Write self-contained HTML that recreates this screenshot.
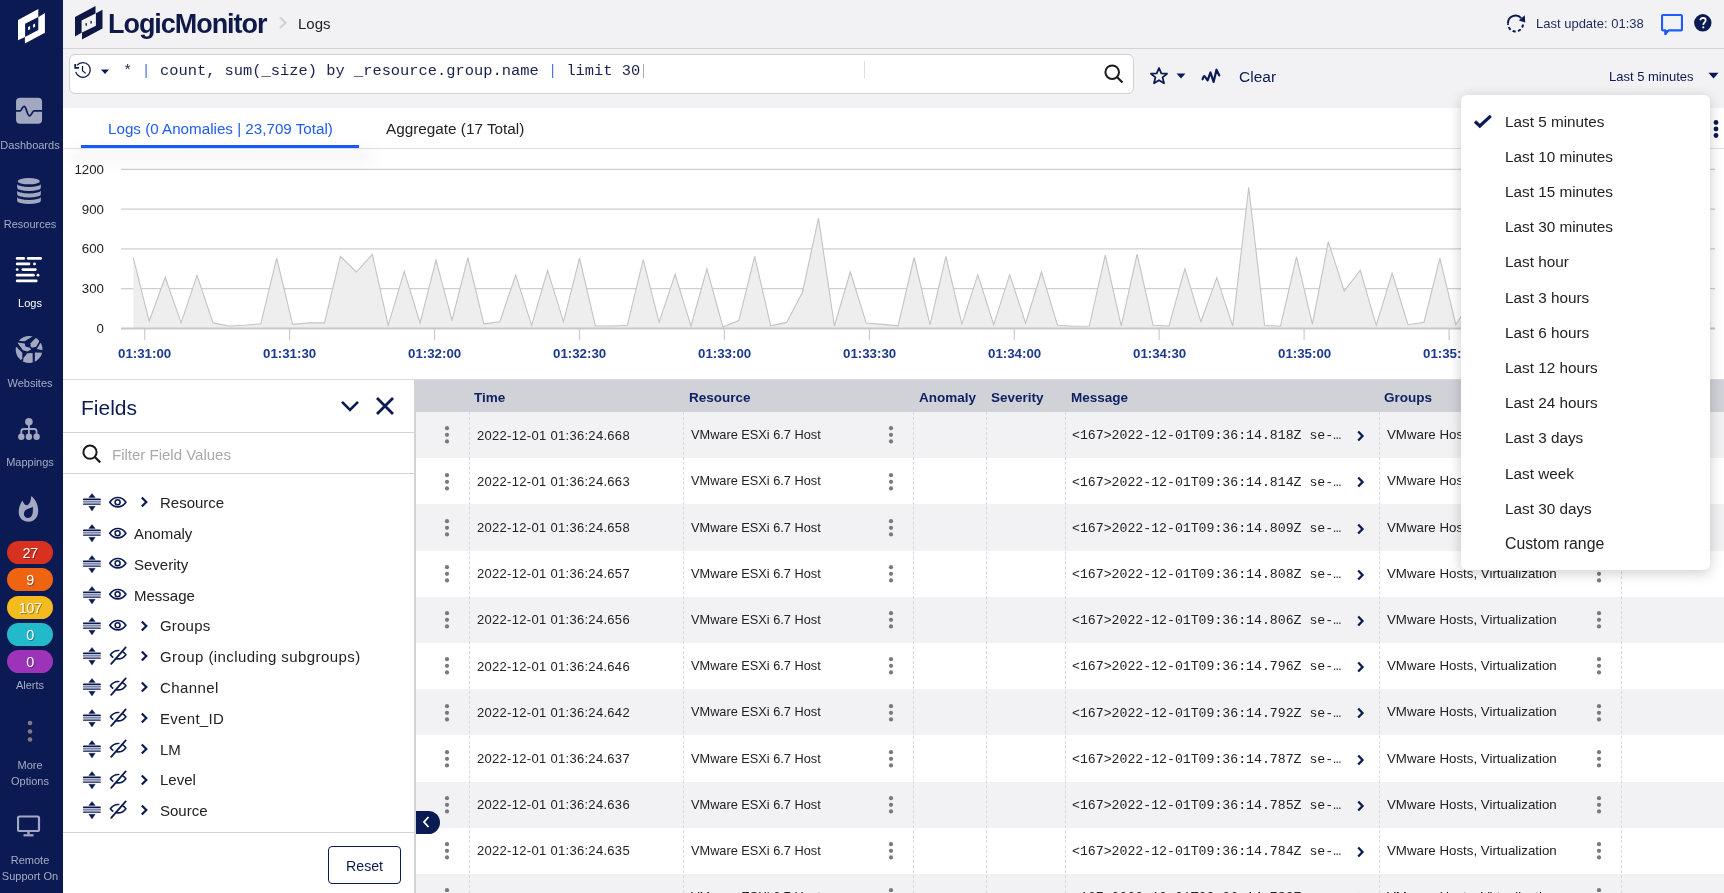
<!DOCTYPE html>
<html><head><meta charset="utf-8"><style>
*{margin:0;padding:0;box-sizing:border-box}
html,body{width:1724px;height:893px;overflow:hidden;background:#fff;font-family:"Liberation Sans",sans-serif;position:relative}
.t,.cell,.fl,.dd,.th,.nl,.yl,.xl,.badge{will-change:transform}
.a{position:absolute}
.nav{left:0;top:0;width:63px;height:893px;background:#0b1a52}
.nl{position:absolute;left:0;width:60px;text-align:center;font-size:11px;line-height:14px;color:#a7acc4;white-space:nowrap}
.hdr{left:63px;top:0;width:1661px;height:49px;background:#f2f2f5;border-bottom:1px solid #d3d3d8}
.bar{left:63px;top:49px;width:1661px;height:59px;background:#f2f2f5}
.sbox{left:69px;top:55px;width:1065px;height:39px;background:#fff;border:1px solid #cfd0d5;border-radius:6px}
.mono{font-family:"Liberation Mono",monospace}
.t{position:absolute;white-space:nowrap;line-height:1}
.badge{position:absolute;left:7px;width:46px;height:23px;border-radius:11.5px;color:#fff;font-size:14.5px;text-align:center;line-height:24px;letter-spacing:-0.6px;text-shadow:1px 1px 0 rgba(0,0,40,.35)}
.th{position:absolute;top:391px;font-size:13.5px;line-height:1;font-weight:bold;color:#0f2263;white-space:nowrap}
.row{position:absolute;left:416px;width:1308px;height:47px}
.row.g{background:#f2f2f5}
.cell{position:absolute;font-size:13px;line-height:1;color:#222;white-space:nowrap}
.vd{position:absolute;top:412px;height:481px;width:0;border-left:1px dashed #d6d8e2}
.fl{position:absolute;font-size:15px;line-height:1;color:#222;white-space:nowrap}
.dd{position:absolute;font-size:15.3px;line-height:1;color:#222;white-space:nowrap;left:1505px}
.yl{position:absolute;font-size:13.3px;line-height:1;color:#222;text-align:right;width:40px;left:64px}
.xl{position:absolute;font-size:13.3px;line-height:1;color:#1b3a8c;font-weight:bold;white-space:nowrap}
</style></head><body>
<div class="a nav"></div>
<svg class="a" style="left:17.9px;top:8.9px" width="28" height="35" viewBox="0 0 28 35" fill="#fff">
<path d="M20.3,0 L20.3,8 L7.1,14.7 L7.1,28 L0,31.2 L0,10.9 Z"/>
<path d="M26.9,4 L26.9,23.7 L6.9,34.5 L6.9,27.9 L20.3,21 L20.3,8.3 Z"/>
<path d="M10.1,18 L12.1,17 L12.1,20.2 L10.1,21.2 Z"/><path d="M15.1,15.6 L17.1,14.6 L17.1,17.8 L15.1,18.8 Z"/>
</svg>
<svg class="a" style="left:15px;top:97px" width="28" height="28" viewBox="0 0 28 28">
<rect x="1.05" y="0.85" width="26" height="26" rx="4" fill="#a3a8c2"/>
<path d="M1,13.85 L5.3,13.85 C6.5,13.85 7.3,9.4 9.1,9.4 C11.5,9.4 12,18.8 14.7,18.8 C16.5,18.8 17.3,13.85 19.2,13.85 L27.1,13.85" stroke="#0b1a52" stroke-width="1.7" fill="none"/>
</svg>
<div class="nl" style="top:138.2px">Dashboards</div>
<svg class="a" style="left:17px;top:177px" width="25" height="28" viewBox="0 0 25 28">
<ellipse cx="11.8" cy="4.2" rx="11.1" ry="3.1" fill="#a3a8c2"/>
<path d="M0.2,7.0 A11.8,3 0 0 0 23.8,7.0 L23.8,11.0 A11.8,3 0 0 1 0.2,11.0 Z" fill="#a3a8c2"/>
<path d="M0.2,13.5 A11.8,3 0 0 0 23.8,13.5 L23.8,17.5 A11.8,3 0 0 1 0.2,17.5 Z" fill="#a3a8c2"/>
<path d="M0.2,20.0 A11.8,3 0 0 0 23.8,20.0 L23.8,24.0 A11.8,3 0 0 1 0.2,24.0 Z" fill="#a3a8c2"/>
</svg>
<div class="nl" style="top:217.2px">Resources</div>
<svg class="a" style="left:15px;top:256px" width="28" height="28" viewBox="0 0 28 28" fill="#fff">
<rect x="0.8" y="1" width="9.3" height="2.8" rx="1.4"/><rect x="11.8" y="1" width="15.2" height="2.8" rx="1.4"/>
<rect x="0.8" y="6.5" width="14.6" height="2.8" rx="1.4"/><circle cx="19.5" cy="7.9" r="1.4"/>
<circle cx="2.2" cy="13.6" r="1.4"/><rect x="6.5" y="12.2" width="15.2" height="2.8" rx="1.4"/>
<rect x="0.8" y="17.8" width="19" height="2.8" rx="1.4"/><circle cx="23" cy="19.2" r="1.4"/>
<rect x="0.8" y="23.5" width="21.8" height="2.8" rx="1.4"/>
</svg>
<div class="nl" style="top:296.2px;color:#fff">Logs</div>
<svg class="a" style="left:12px;top:332px" width="34" height="34" viewBox="0 0 34 34">
<defs><clipPath id="gc"><circle cx="17.1" cy="17.5" r="13.4"/></clipPath></defs>
<g clip-path="url(#gc)" fill="#a3a8c2">
<path d="M3,0 L24,0 L21.3,4.1 L12.6,9.3 L8,8.9 L3,7.4 Z"/>
<path d="M18.6,11.3 L23.4,6.2 Q24.5,5.5 25.5,6.4 L27,8.3 Q27.3,9.3 26.8,10.2 L24.2,14.7 L20.9,15.6 Q19.3,15.6 18.6,14.4 Z"/>
<path d="M24.9,17 L28.3,11 L34,12 L34,18.8 Z"/>
<path d="M5.2,10.6 L12.7,11.5 L13.5,14.6 L17.8,15.7 L19.1,17.4 L15.3,19.5 L11,18.3 Z"/>
<path d="M0,13.5 L3.8,14.3 L10.3,20.7 L10.3,26.8 L8,28.5 L0,34 Z"/>
<path d="M15.3,21.3 L20.6,20.9 L20.8,34 L9,34 L11.1,28.9 L11.5,25.9 Z"/>
<path d="M22.9,20.5 L34,21 L34,34 L22.8,34 Z"/>
</g></svg>
<div class="nl" style="top:376.2px">Websites</div>
<svg class="a" style="left:17px;top:417px" width="24" height="24" viewBox="0 0 24 24" fill="#a3a8c2">
<circle cx="11.9" cy="4.7" r="3.8"/><rect x="11" y="6" width="1.8" height="12"/>
<path d="M4.3,18 L4.3,14.5 Q4.3,12 6.8,12 L17.1,12 Q19.6,12 19.6,14.5 L19.6,18" stroke="#a3a8c2" stroke-width="1.8" fill="none"/>
<circle cx="4.3" cy="19.8" r="3.2"/><circle cx="11.9" cy="19.8" r="3.2"/><circle cx="19.6" cy="19.8" r="3.2"/>
</svg>
<div class="nl" style="top:455.2px">Mappings</div>
<svg class="a" style="left:18px;top:496px" width="22" height="28" viewBox="0 0 22 28">
<path d="M4.5,4.5 C5.5,7.5 7,9.2 8.8,9.2 C11,9.2 12.8,6 13.3,0 C17.5,3.5 20.2,8.5 20.2,15 C20.2,21.5 16,25.8 10.5,25.8 C5,25.8 0.7,22 0.7,16 C0.7,11 2.5,7.5 4.5,4.5 Z M14.8,10.8 C15,14 15,16 14.3,18.5 C13.5,21 11.8,22 10,22 C7.5,22 5.9,20 5.9,18 C5.9,15.5 7.5,13.8 9.5,13 C11.5,12.2 13.5,12 14.8,10.8 Z" fill="#a3a8c2" fill-rule="evenodd"/>
</svg>
<div class="badge" style="top:541px;background:#d9311f">27</div>
<div class="badge" style="top:568px;background:#ee6410">9</div>
<div class="badge" style="top:595.5px;background:#f3bb1d">107</div>
<div class="badge" style="top:622.8px;background:#22b9cb">0</div>
<div class="badge" style="top:650px;background:#9d33b8">0</div>
<div class="nl" style="top:678.2px">Alerts</div>
<svg class="a" style="left:27px;top:720px" width="6" height="24" fill="#7f7c85"><circle cx="3" cy="3" r="2.3"/><circle cx="3" cy="11.5" r="2.3"/><circle cx="3" cy="19.5" r="2.3"/></svg>
<div class="nl" style="top:757.2px;line-height:16px">More<br>Options</div>
<svg class="a" style="left:17px;top:815px" width="24" height="24" viewBox="0 0 24 24">
<rect x="1" y="1.5" width="21" height="14.5" rx="1.5" stroke="#a3a8c2" stroke-width="2.2" fill="none"/>
<rect x="10.3" y="16" width="2.4" height="3.5" fill="#a3a8c2"/><rect x="6.5" y="19.2" width="10" height="2.2" fill="#a3a8c2"/>
</svg>
<div class="nl" style="top:852.2px;line-height:16px">Remote<br>Support On</div>
<div class="a hdr"></div>
<svg class="a" style="left:75.2px;top:6.2px" width="28" height="34" viewBox="0 0 28 34" fill="#0f1845">
<path d="M20.5,0 L20.5,7.5 L6.6,14.4 L6.6,26.8 L0,30.6 L0,11.1 Z"/>
<path d="M27.5,3.8 L27.5,22.6 L7,33.4 L7,26.6 L20.9,19.8 L20.9,7.3 Z"/>
<path d="M10.5,17.2 Q11.3,16.5 11.9,17.6 L11.9,19.3 Q11.2,20.5 10.5,19.6 Z"/><path d="M15.4,14.9 Q16.2,14.2 16.8,15.3 L16.8,17 Q16.1,18.2 15.4,17.3 Z"/>
</svg>
<div class="t" style="left:108px;top:11px;font-size:27px;font-weight:bold;letter-spacing:-1.05px;color:#101a48">LogicMonitor</div>
<svg class="a" style="left:278px;top:16px" width="10" height="14"><path d="M2,1.5 L7.5,6.8 L2,12" stroke="#d2d2d6" stroke-width="2.2" fill="none"/></svg>
<div class="t" style="left:298px;top:16.3px;font-size:15px;color:#222">Logs</div>
<svg class="a" style="left:1505px;top:13px" width="22" height="20" viewBox="0 0 22 20">
<path d="M3,10.5 A7.5,7.5 0 0 1 16.2,5.2" stroke="#0b1a52" stroke-width="2" fill="none"/>
<path d="M13.8,7.6 L20.2,9.6 L19.8,2.2 Z" fill="#0b1a52"/>
<path d="M18,11.5 A7.5,7.5 0 0 1 3,10.5" stroke="#0b1a52" stroke-width="2" fill="none" stroke-dasharray="3.2 2.3"/>
</svg>
<div class="t" style="left:1536px;top:16.8px;font-size:13px;color:#1c2a5c">Last update: 01:38</div>
<svg class="a" style="left:1660px;top:13px" width="25" height="24" viewBox="0 0 25 24">
<path d="M3,2.05 L21,2.05 Q21.95,2.05 21.95,3 L21.95,16.4 Q21.95,17.35 21,17.35 L8.5,17.35 L5.2,21 L5.2,17.35 L3,17.35 Q2.05,17.35 2.05,16.4 L2.05,3 Q2.05,2.05 3,2.05 Z" stroke="#1f5bff" stroke-width="2.1" fill="none" stroke-linejoin="round"/>
<path d="M4.5,17 L10,17 L5.5,22.5 Z" fill="#1f5bff"/>
</svg>
<svg class="a" style="left:1694px;top:14px" width="18" height="18" viewBox="0 0 18 18">
<circle cx="8.8" cy="8.8" r="8.7" fill="#0b1a52"/>
<path d="M6.2,6.2 C6.6,4.6 7.6,3.9 9,3.9 C10.6,3.9 11.7,4.9 11.7,6.3 C11.7,8.3 9.3,8.6 9.3,10.9" stroke="#fff" stroke-width="1.7" fill="none"/>
<rect x="8.4" y="12.4" width="1.8" height="1.9" fill="#fff"/>
</svg>
<div class="a bar"></div>
<div class="a sbox" style="top:54px;height:40px"></div>
<svg class="a" style="left:74px;top:61px" width="18" height="18" viewBox="0 0 18 18">
<path d="M1.7,10.8 A7.4,7.4 0 1 0 3,4.4" stroke="#0b1a52" stroke-width="1.25" fill="none"/>
<path d="M1.2,3 L1.2,6.8 L4.9,6.8" stroke="#0b1a52" stroke-width="1.7" fill="none"/>
<path d="M8.5,5.1 L8.5,9.6 L11.7,12.4" stroke="#0b1a52" stroke-width="1.25" fill="none"/>
</svg>
<svg class="a" style="left:100px;top:69px" width="10" height="6"><path d="M1,0.5 L9,0.5 L5,5 Z" fill="#0b1a52"/></svg>
<div class="t mono" style="left:123px;top:63.6px;font-size:15.4px;color:#1a2250">* <span style="color:#5577d4">|</span> count, sum(_size) by _resource.group.name <span style="color:#5577d4">|</span> limit 30</div>
<div class="a" style="left:643px;top:64px;width:1px;height:14px;background:#aaa"></div>
<div class="a" style="left:864px;top:61px;width:1px;height:17px;background:#ddd"></div>
<svg class="a" style="left:1104px;top:64px" width="20" height="20" viewBox="0 0 20 20">
<circle cx="8.2" cy="8.2" r="6.8" stroke="#1a1a1a" stroke-width="2" fill="none"/>
<path d="M13,13 L18.5,18.5" stroke="#1a1a1a" stroke-width="2.2"/>
</svg>
<svg class="a" style="left:1149px;top:66px" width="20" height="20" viewBox="0 0 20 20">
<path d="M10,2 L12.3,7.3 L18,7.7 L13.6,11.4 L15,17.3 L10,14.2 L5,17.3 L6.4,11.4 L2,7.7 L7.7,7.3 Z" stroke="#0b1a52" stroke-width="1.8" fill="none" stroke-linejoin="round"/>
</svg>
<svg class="a" style="left:1176px;top:73px" width="10" height="6"><path d="M0.5,0.5 L9.5,0.5 L5,5.5 Z" fill="#0b1a52"/></svg>
<svg class="a" style="left:1201px;top:68px" width="21" height="16" viewBox="0 0 21 16">
<path d="M1.6,11.3 Q2.5,8.2 3.5,8.2 L6.6,12.4 L9.5,4.5 L12.6,13.9 L15.5,1.7 L18.3,7.4" stroke="#0b1a52" stroke-width="2.2" fill="none" stroke-linejoin="round" stroke-linecap="round"/>
</svg>
<div class="t" style="left:1239px;top:68.8px;font-size:15.5px;color:#0b1a52">Clear</div>
<div class="t" style="left:1609px;top:70px;font-size:13px;color:#0b1a52">Last 5 minutes</div>
<svg class="a" style="left:1708px;top:72px" width="11" height="7"><path d="M0.5,0.8 L10.5,0.8 L5.5,6.5 Z" fill="#0b1a52"/></svg>
<div class="a" style="left:63px;top:108px;width:1661px;height:272px;background:#fff"></div>
<div class="a" style="left:63px;top:148px;width:1661px;height:1px;background:#dfe0e6"></div>
<div class="a" style="left:63px;top:379px;width:1661px;height:1px;background:#d9d9de"></div>
<div class="t" style="left:107.5px;top:121.3px;font-size:15.2px;color:#1f5bf0">Logs (0 Anomalies | 23,709 Total)</div>
<div class="a" style="left:81px;top:145px;width:278px;height:3px;background:#1a5cff"></div>
<div class="t" style="left:385.5px;top:121.3px;font-size:15.3px;color:#222">Aggregate (17 Total)</div>
<svg class="a" style="left:1711px;top:119px" width="10" height="20" fill="#0b1a52"><circle cx="5" cy="3.5" r="2.4"/><circle cx="5" cy="10" r="2.4"/><circle cx="5" cy="16.5" r="2.4"/></svg>
<svg class="a" style="left:0;top:0" width="1724" height="380">
<line x1="121" y1="169.4" x2="1715" y2="169.4" stroke="#cfcfcf" stroke-width="1.2"/><line x1="121" y1="209.2" x2="1715" y2="209.2" stroke="#cfcfcf" stroke-width="1.2"/><line x1="121" y1="248.9" x2="1715" y2="248.9" stroke="#cfcfcf" stroke-width="1.2"/><line x1="121" y1="288.7" x2="1715" y2="288.7" stroke="#cfcfcf" stroke-width="1.2"/>
<path d="M133.3,328.5 L133.3,257.9 L149.2,321.3 L165.2,277.2 L181.1,322.9 L197.0,275.4 L213.0,322.9 L228.9,326.0 L244.8,325.3 L260.8,323.8 L276.7,258.1 L292.6,324.4 L308.6,322.9 L324.5,322.9 L340.4,256.3 L356.4,272.0 L372.3,254.5 L388.2,325.3 L404.2,271.3 L420.1,322.9 L436.0,260.1 L452.0,320.2 L467.9,257.7 L483.8,323.8 L499.8,321.8 L515.7,274.9 L531.6,325.3 L547.6,270.4 L563.5,321.8 L579.5,258.1 L595.4,326.0 L611.3,326.0 L627.3,325.3 L643.2,259.7 L659.1,322.4 L675.1,274.3 L691.0,326.0 L706.9,268.9 L722.9,326.9 L738.8,320.6 L754.7,256.3 L770.7,325.8 L786.6,322.4 L802.5,292.2 L818.5,218.2 L834.4,326.0 L850.3,272.0 L866.3,323.1 L882.2,324.4 L898.1,325.8 L914.1,257.5 L930.0,324.9 L945.9,256.3 L961.9,324.2 L977.8,274.7 L993.7,324.7 L1009.7,274.7 L1025.6,323.1 L1041.5,272.0 L1057.5,325.3 L1073.4,326.2 L1089.3,326.0 L1105.3,255.2 L1121.2,325.8 L1137.1,254.1 L1153.1,325.3 L1169.0,326.0 L1184.9,268.7 L1200.9,321.8 L1216.8,277.6 L1232.7,325.8 L1248.7,187.3 L1264.6,325.3 L1280.5,326.2 L1296.5,256.8 L1312.4,324.2 L1328.3,241.8 L1344.3,291.1 L1360.2,270.2 L1376.2,325.3 L1392.1,273.1 L1408.0,324.7 L1424.0,322.2 L1439.9,258.1 L1455.8,324.7 L1471.8,300 L1487.7,322 L1503.6,270 L1519.6,324 L1535.5,325 L1551.4,260 L1567.4,323 L1583.3,280 L1599.2,324 L1615.2,322 L1631.1,265 L1647.0,325 L1663.0,324 L1678.9,270 L1694.8,322 L1710.8,323 L1710.8,328.5 Z" fill="#eeeeee"/>
<polyline points="133.3,257.9 149.2,321.3 165.2,277.2 181.1,322.9 197.0,275.4 213.0,322.9 228.9,326.0 244.8,325.3 260.8,323.8 276.7,258.1 292.6,324.4 308.6,322.9 324.5,322.9 340.4,256.3 356.4,272.0 372.3,254.5 388.2,325.3 404.2,271.3 420.1,322.9 436.0,260.1 452.0,320.2 467.9,257.7 483.8,323.8 499.8,321.8 515.7,274.9 531.6,325.3 547.6,270.4 563.5,321.8 579.5,258.1 595.4,326.0 611.3,326.0 627.3,325.3 643.2,259.7 659.1,322.4 675.1,274.3 691.0,326.0 706.9,268.9 722.9,326.9 738.8,320.6 754.7,256.3 770.7,325.8 786.6,322.4 802.5,292.2 818.5,218.2 834.4,326.0 850.3,272.0 866.3,323.1 882.2,324.4 898.1,325.8 914.1,257.5 930.0,324.9 945.9,256.3 961.9,324.2 977.8,274.7 993.7,324.7 1009.7,274.7 1025.6,323.1 1041.5,272.0 1057.5,325.3 1073.4,326.2 1089.3,326.0 1105.3,255.2 1121.2,325.8 1137.1,254.1 1153.1,325.3 1169.0,326.0 1184.9,268.7 1200.9,321.8 1216.8,277.6 1232.7,325.8 1248.7,187.3 1264.6,325.3 1280.5,326.2 1296.5,256.8 1312.4,324.2 1328.3,241.8 1344.3,291.1 1360.2,270.2 1376.2,325.3 1392.1,273.1 1408.0,324.7 1424.0,322.2 1439.9,258.1 1455.8,324.7 1471.8,300 1487.7,322 1503.6,270 1519.6,324 1535.5,325 1551.4,260 1567.4,323 1583.3,280 1599.2,324 1615.2,322 1631.1,265 1647.0,325 1663.0,324 1678.9,270 1694.8,322 1710.8,323" stroke="#c4c4c4" stroke-width="1.1" fill="none" stroke-linejoin="miter"/>
<line x1="121" y1="328.5" x2="1715" y2="328.5" stroke="#c8c8c8" stroke-width="2"/>
<line x1="144.7" y1="329" x2="144.7" y2="340" stroke="#cccccc" stroke-width="1.2"/><line x1="289.6" y1="329" x2="289.6" y2="340" stroke="#cccccc" stroke-width="1.2"/><line x1="434.6" y1="329" x2="434.6" y2="340" stroke="#cccccc" stroke-width="1.2"/><line x1="579.5" y1="329" x2="579.5" y2="340" stroke="#cccccc" stroke-width="1.2"/><line x1="724.4" y1="329" x2="724.4" y2="340" stroke="#cccccc" stroke-width="1.2"/><line x1="869.4" y1="329" x2="869.4" y2="340" stroke="#cccccc" stroke-width="1.2"/><line x1="1014.3" y1="329" x2="1014.3" y2="340" stroke="#cccccc" stroke-width="1.2"/><line x1="1159.2" y1="329" x2="1159.2" y2="340" stroke="#cccccc" stroke-width="1.2"/><line x1="1304.1" y1="329" x2="1304.1" y2="340" stroke="#cccccc" stroke-width="1.2"/><line x1="1449.1" y1="329" x2="1449.1" y2="340" stroke="#cccccc" stroke-width="1.2"/><line x1="1594.0" y1="329" x2="1594.0" y2="340" stroke="#cccccc" stroke-width="1.2"/>
</svg>
<div class="yl" style="top:162.7px">1200</div>
<div class="yl" style="top:202.5px">900</div>
<div class="yl" style="top:242.3px">600</div>
<div class="yl" style="top:282.1px">300</div>
<div class="yl" style="top:321.8px">0</div>
<div class="xl" style="left:118.2px;top:347px">01:31:00</div>
<div class="xl" style="left:263.1px;top:347px">01:31:30</div>
<div class="xl" style="left:408.1px;top:347px">01:32:00</div>
<div class="xl" style="left:553.0px;top:347px">01:32:30</div>
<div class="xl" style="left:697.9px;top:347px">01:33:00</div>
<div class="xl" style="left:842.9px;top:347px">01:33:30</div>
<div class="xl" style="left:987.8px;top:347px">01:34:00</div>
<div class="xl" style="left:1132.7px;top:347px">01:34:30</div>
<div class="xl" style="left:1277.6px;top:347px">01:35:00</div>
<div class="xl" style="left:1422.6px;top:347px">01:35:30</div>
<div class="a" style="left:72px;top:147px;width:300px;height:20px;background:rgba(0,0,0,0.028);filter:blur(6px)"></div>
<div class="a" style="left:63px;top:380px;width:351px;height:513px;background:#fff"></div>
<div class="t" style="left:81px;top:396.6px;font-size:21px;color:#0b1a52">Fields</div>
<svg class="a" style="left:340px;top:400px" width="20" height="12"><path d="M2,1.8 L10,9.8 L18,1.8" stroke="#0b1a52" stroke-width="2.6" fill="none"/></svg>
<svg class="a" style="left:375px;top:396px" width="20" height="20"><path d="M2,2 L18,18 M18,2 L2,18" stroke="#0b1a52" stroke-width="2.8" fill="none"/></svg>
<div class="a" style="left:63px;top:432px;width:351px;height:1px;background:#d3d4d9"></div>
<svg class="a" style="left:82px;top:444px" width="20" height="20" viewBox="0 0 20 20">
<circle cx="8" cy="8.2" r="6.6" stroke="#1a1a1a" stroke-width="2" fill="none"/>
<path d="M12.8,13 L18.2,18.4" stroke="#1a1a1a" stroke-width="2.2"/>
</svg>
<div class="t" style="left:112px;top:447.4px;font-size:15px;color:#a9a9ad">Filter Field Values</div>
<div class="a" style="left:63px;top:473px;width:351px;height:1px;background:#d3d4d9"></div>
<svg class="a" style="left:83px;top:493.3px" width="18" height="18" viewBox="0 0 18 18" fill="#0b1a52">
<path d="M9,0.5 L12.2,4.4 L5.8,4.4 Z" stroke="#0b1a52" stroke-width="0.4" stroke-linejoin="round"/><path d="M9,17.9 L12.2,13.3 L5.8,13.3 Z" stroke="#0b1a52" stroke-width="0.4" stroke-linejoin="round"/>
<rect x="0" y="7" width="17.8" height="2.9" fill="#c5c9dc"/><rect x="0" y="7.9" width="17.8" height="1.5" fill="#7c86aa"/>
<rect x="0" y="5.6" width="17.8" height="1.4" rx="0.6"/><rect x="0" y="10.4" width="17.8" height="1.4" rx="0.6"/>
</svg>
<svg class="a" style="left:108px;top:495.8px" width="20" height="13" viewBox="0 0 20 13">
<path d="M1.8,6.2 C4.5,2.2 7.3,1.5 9.8,1.5 C12.3,1.5 15.1,2.2 17.9,6.2 C15.1,10.2 12.3,10.9 9.8,10.9 C7.3,10.9 4.5,10.2 1.8,6.2 Z" stroke="#0b1a52" stroke-width="1.7" fill="none" stroke-linejoin="round"/>
<circle cx="9.6" cy="6.3" r="2.5" stroke="#0b1a52" stroke-width="1.5" fill="none"/>
</svg>
<svg class="a" style="left:139.5px;top:496.3px" width="9" height="12"><path d="M1.8,1.5 L6.3,6 L1.8,10.5" stroke="#0b1a52" stroke-width="2.2" fill="none"/></svg>
<div class="fl" style="left:160px;top:495.2px;letter-spacing:0px">Resource</div>
<svg class="a" style="left:83px;top:524.1px" width="18" height="18" viewBox="0 0 18 18" fill="#0b1a52">
<path d="M9,0.5 L12.2,4.4 L5.8,4.4 Z" stroke="#0b1a52" stroke-width="0.4" stroke-linejoin="round"/><path d="M9,17.9 L12.2,13.3 L5.8,13.3 Z" stroke="#0b1a52" stroke-width="0.4" stroke-linejoin="round"/>
<rect x="0" y="7" width="17.8" height="2.9" fill="#c5c9dc"/><rect x="0" y="7.9" width="17.8" height="1.5" fill="#7c86aa"/>
<rect x="0" y="5.6" width="17.8" height="1.4" rx="0.6"/><rect x="0" y="10.4" width="17.8" height="1.4" rx="0.6"/>
</svg>
<svg class="a" style="left:108px;top:526.6px" width="20" height="13" viewBox="0 0 20 13">
<path d="M1.8,6.2 C4.5,2.2 7.3,1.5 9.8,1.5 C12.3,1.5 15.1,2.2 17.9,6.2 C15.1,10.2 12.3,10.9 9.8,10.9 C7.3,10.9 4.5,10.2 1.8,6.2 Z" stroke="#0b1a52" stroke-width="1.7" fill="none" stroke-linejoin="round"/>
<circle cx="9.6" cy="6.3" r="2.5" stroke="#0b1a52" stroke-width="1.5" fill="none"/>
</svg>
<div class="fl" style="left:133.5px;top:526.0px">Anomaly</div>
<svg class="a" style="left:83px;top:554.9px" width="18" height="18" viewBox="0 0 18 18" fill="#0b1a52">
<path d="M9,0.5 L12.2,4.4 L5.8,4.4 Z" stroke="#0b1a52" stroke-width="0.4" stroke-linejoin="round"/><path d="M9,17.9 L12.2,13.3 L5.8,13.3 Z" stroke="#0b1a52" stroke-width="0.4" stroke-linejoin="round"/>
<rect x="0" y="7" width="17.8" height="2.9" fill="#c5c9dc"/><rect x="0" y="7.9" width="17.8" height="1.5" fill="#7c86aa"/>
<rect x="0" y="5.6" width="17.8" height="1.4" rx="0.6"/><rect x="0" y="10.4" width="17.8" height="1.4" rx="0.6"/>
</svg>
<svg class="a" style="left:108px;top:557.4px" width="20" height="13" viewBox="0 0 20 13">
<path d="M1.8,6.2 C4.5,2.2 7.3,1.5 9.8,1.5 C12.3,1.5 15.1,2.2 17.9,6.2 C15.1,10.2 12.3,10.9 9.8,10.9 C7.3,10.9 4.5,10.2 1.8,6.2 Z" stroke="#0b1a52" stroke-width="1.7" fill="none" stroke-linejoin="round"/>
<circle cx="9.6" cy="6.3" r="2.5" stroke="#0b1a52" stroke-width="1.5" fill="none"/>
</svg>
<div class="fl" style="left:133.5px;top:556.8px">Severity</div>
<svg class="a" style="left:83px;top:585.7px" width="18" height="18" viewBox="0 0 18 18" fill="#0b1a52">
<path d="M9,0.5 L12.2,4.4 L5.8,4.4 Z" stroke="#0b1a52" stroke-width="0.4" stroke-linejoin="round"/><path d="M9,17.9 L12.2,13.3 L5.8,13.3 Z" stroke="#0b1a52" stroke-width="0.4" stroke-linejoin="round"/>
<rect x="0" y="7" width="17.8" height="2.9" fill="#c5c9dc"/><rect x="0" y="7.9" width="17.8" height="1.5" fill="#7c86aa"/>
<rect x="0" y="5.6" width="17.8" height="1.4" rx="0.6"/><rect x="0" y="10.4" width="17.8" height="1.4" rx="0.6"/>
</svg>
<svg class="a" style="left:108px;top:588.2px" width="20" height="13" viewBox="0 0 20 13">
<path d="M1.8,6.2 C4.5,2.2 7.3,1.5 9.8,1.5 C12.3,1.5 15.1,2.2 17.9,6.2 C15.1,10.2 12.3,10.9 9.8,10.9 C7.3,10.9 4.5,10.2 1.8,6.2 Z" stroke="#0b1a52" stroke-width="1.7" fill="none" stroke-linejoin="round"/>
<circle cx="9.6" cy="6.3" r="2.5" stroke="#0b1a52" stroke-width="1.5" fill="none"/>
</svg>
<div class="fl" style="left:133.5px;top:587.6px">Message</div>
<svg class="a" style="left:83px;top:616.5px" width="18" height="18" viewBox="0 0 18 18" fill="#0b1a52">
<path d="M9,0.5 L12.2,4.4 L5.8,4.4 Z" stroke="#0b1a52" stroke-width="0.4" stroke-linejoin="round"/><path d="M9,17.9 L12.2,13.3 L5.8,13.3 Z" stroke="#0b1a52" stroke-width="0.4" stroke-linejoin="round"/>
<rect x="0" y="7" width="17.8" height="2.9" fill="#c5c9dc"/><rect x="0" y="7.9" width="17.8" height="1.5" fill="#7c86aa"/>
<rect x="0" y="5.6" width="17.8" height="1.4" rx="0.6"/><rect x="0" y="10.4" width="17.8" height="1.4" rx="0.6"/>
</svg>
<svg class="a" style="left:108px;top:619.0px" width="20" height="13" viewBox="0 0 20 13">
<path d="M1.8,6.2 C4.5,2.2 7.3,1.5 9.8,1.5 C12.3,1.5 15.1,2.2 17.9,6.2 C15.1,10.2 12.3,10.9 9.8,10.9 C7.3,10.9 4.5,10.2 1.8,6.2 Z" stroke="#0b1a52" stroke-width="1.7" fill="none" stroke-linejoin="round"/>
<circle cx="9.6" cy="6.3" r="2.5" stroke="#0b1a52" stroke-width="1.5" fill="none"/>
</svg>
<svg class="a" style="left:139.5px;top:619.5px" width="9" height="12"><path d="M1.8,1.5 L6.3,6 L1.8,10.5" stroke="#0b1a52" stroke-width="2.2" fill="none"/></svg>
<div class="fl" style="left:160px;top:618.4px;letter-spacing:0.2px">Groups</div>
<svg class="a" style="left:83px;top:647.3px" width="18" height="18" viewBox="0 0 18 18" fill="#0b1a52">
<path d="M9,0.5 L12.2,4.4 L5.8,4.4 Z" stroke="#0b1a52" stroke-width="0.4" stroke-linejoin="round"/><path d="M9,17.9 L12.2,13.3 L5.8,13.3 Z" stroke="#0b1a52" stroke-width="0.4" stroke-linejoin="round"/>
<rect x="0" y="7" width="17.8" height="2.9" fill="#c5c9dc"/><rect x="0" y="7.9" width="17.8" height="1.5" fill="#7c86aa"/>
<rect x="0" y="5.6" width="17.8" height="1.4" rx="0.6"/><rect x="0" y="10.4" width="17.8" height="1.4" rx="0.6"/>
</svg>
<svg class="a" style="left:108px;top:646.3px" width="20" height="20" viewBox="0 0 20 20">
<path d="M2.4,8.7 C5,5.2 7.5,4.5 10.1,4.5 C12.7,4.5 15.3,5.2 17.9,8.7 C15.3,12.2 12.7,12.9 10.1,12.9 C7.5,12.9 5,12.2 2.4,8.7 Z" stroke="#0b1a52" stroke-width="1.6" fill="none" stroke-linejoin="round"/>
<path d="M2.1,16.6 L16.6,0.1" stroke="#fff" stroke-width="2"/>
<path d="M3.2,17.9 L17.7,1.4" stroke="#0b1a52" stroke-width="1.8" stroke-linecap="round"/>
</svg>
<svg class="a" style="left:139.5px;top:650.3px" width="9" height="12"><path d="M1.8,1.5 L6.3,6 L1.8,10.5" stroke="#0b1a52" stroke-width="2.2" fill="none"/></svg>
<div class="fl" style="left:160px;top:649.2px;letter-spacing:0.42px">Group (including subgroups)</div>
<svg class="a" style="left:83px;top:678.1px" width="18" height="18" viewBox="0 0 18 18" fill="#0b1a52">
<path d="M9,0.5 L12.2,4.4 L5.8,4.4 Z" stroke="#0b1a52" stroke-width="0.4" stroke-linejoin="round"/><path d="M9,17.9 L12.2,13.3 L5.8,13.3 Z" stroke="#0b1a52" stroke-width="0.4" stroke-linejoin="round"/>
<rect x="0" y="7" width="17.8" height="2.9" fill="#c5c9dc"/><rect x="0" y="7.9" width="17.8" height="1.5" fill="#7c86aa"/>
<rect x="0" y="5.6" width="17.8" height="1.4" rx="0.6"/><rect x="0" y="10.4" width="17.8" height="1.4" rx="0.6"/>
</svg>
<svg class="a" style="left:108px;top:677.1px" width="20" height="20" viewBox="0 0 20 20">
<path d="M2.4,8.7 C5,5.2 7.5,4.5 10.1,4.5 C12.7,4.5 15.3,5.2 17.9,8.7 C15.3,12.2 12.7,12.9 10.1,12.9 C7.5,12.9 5,12.2 2.4,8.7 Z" stroke="#0b1a52" stroke-width="1.6" fill="none" stroke-linejoin="round"/>
<path d="M2.1,16.6 L16.6,0.1" stroke="#fff" stroke-width="2"/>
<path d="M3.2,17.9 L17.7,1.4" stroke="#0b1a52" stroke-width="1.8" stroke-linecap="round"/>
</svg>
<svg class="a" style="left:139.5px;top:681.1px" width="9" height="12"><path d="M1.8,1.5 L6.3,6 L1.8,10.5" stroke="#0b1a52" stroke-width="2.2" fill="none"/></svg>
<div class="fl" style="left:160px;top:680.0px;letter-spacing:0.4px">Channel</div>
<svg class="a" style="left:83px;top:708.9px" width="18" height="18" viewBox="0 0 18 18" fill="#0b1a52">
<path d="M9,0.5 L12.2,4.4 L5.8,4.4 Z" stroke="#0b1a52" stroke-width="0.4" stroke-linejoin="round"/><path d="M9,17.9 L12.2,13.3 L5.8,13.3 Z" stroke="#0b1a52" stroke-width="0.4" stroke-linejoin="round"/>
<rect x="0" y="7" width="17.8" height="2.9" fill="#c5c9dc"/><rect x="0" y="7.9" width="17.8" height="1.5" fill="#7c86aa"/>
<rect x="0" y="5.6" width="17.8" height="1.4" rx="0.6"/><rect x="0" y="10.4" width="17.8" height="1.4" rx="0.6"/>
</svg>
<svg class="a" style="left:108px;top:707.9px" width="20" height="20" viewBox="0 0 20 20">
<path d="M2.4,8.7 C5,5.2 7.5,4.5 10.1,4.5 C12.7,4.5 15.3,5.2 17.9,8.7 C15.3,12.2 12.7,12.9 10.1,12.9 C7.5,12.9 5,12.2 2.4,8.7 Z" stroke="#0b1a52" stroke-width="1.6" fill="none" stroke-linejoin="round"/>
<path d="M2.1,16.6 L16.6,0.1" stroke="#fff" stroke-width="2"/>
<path d="M3.2,17.9 L17.7,1.4" stroke="#0b1a52" stroke-width="1.8" stroke-linecap="round"/>
</svg>
<svg class="a" style="left:139.5px;top:711.9px" width="9" height="12"><path d="M1.8,1.5 L6.3,6 L1.8,10.5" stroke="#0b1a52" stroke-width="2.2" fill="none"/></svg>
<div class="fl" style="left:160px;top:710.8px;letter-spacing:0.3px">Event_ID</div>
<svg class="a" style="left:83px;top:739.7px" width="18" height="18" viewBox="0 0 18 18" fill="#0b1a52">
<path d="M9,0.5 L12.2,4.4 L5.8,4.4 Z" stroke="#0b1a52" stroke-width="0.4" stroke-linejoin="round"/><path d="M9,17.9 L12.2,13.3 L5.8,13.3 Z" stroke="#0b1a52" stroke-width="0.4" stroke-linejoin="round"/>
<rect x="0" y="7" width="17.8" height="2.9" fill="#c5c9dc"/><rect x="0" y="7.9" width="17.8" height="1.5" fill="#7c86aa"/>
<rect x="0" y="5.6" width="17.8" height="1.4" rx="0.6"/><rect x="0" y="10.4" width="17.8" height="1.4" rx="0.6"/>
</svg>
<svg class="a" style="left:108px;top:738.7px" width="20" height="20" viewBox="0 0 20 20">
<path d="M2.4,8.7 C5,5.2 7.5,4.5 10.1,4.5 C12.7,4.5 15.3,5.2 17.9,8.7 C15.3,12.2 12.7,12.9 10.1,12.9 C7.5,12.9 5,12.2 2.4,8.7 Z" stroke="#0b1a52" stroke-width="1.6" fill="none" stroke-linejoin="round"/>
<path d="M2.1,16.6 L16.6,0.1" stroke="#fff" stroke-width="2"/>
<path d="M3.2,17.9 L17.7,1.4" stroke="#0b1a52" stroke-width="1.8" stroke-linecap="round"/>
</svg>
<svg class="a" style="left:139.5px;top:742.7px" width="9" height="12"><path d="M1.8,1.5 L6.3,6 L1.8,10.5" stroke="#0b1a52" stroke-width="2.2" fill="none"/></svg>
<div class="fl" style="left:160px;top:741.6px;letter-spacing:0px">LM</div>
<svg class="a" style="left:83px;top:770.5px" width="18" height="18" viewBox="0 0 18 18" fill="#0b1a52">
<path d="M9,0.5 L12.2,4.4 L5.8,4.4 Z" stroke="#0b1a52" stroke-width="0.4" stroke-linejoin="round"/><path d="M9,17.9 L12.2,13.3 L5.8,13.3 Z" stroke="#0b1a52" stroke-width="0.4" stroke-linejoin="round"/>
<rect x="0" y="7" width="17.8" height="2.9" fill="#c5c9dc"/><rect x="0" y="7.9" width="17.8" height="1.5" fill="#7c86aa"/>
<rect x="0" y="5.6" width="17.8" height="1.4" rx="0.6"/><rect x="0" y="10.4" width="17.8" height="1.4" rx="0.6"/>
</svg>
<svg class="a" style="left:108px;top:769.5px" width="20" height="20" viewBox="0 0 20 20">
<path d="M2.4,8.7 C5,5.2 7.5,4.5 10.1,4.5 C12.7,4.5 15.3,5.2 17.9,8.7 C15.3,12.2 12.7,12.9 10.1,12.9 C7.5,12.9 5,12.2 2.4,8.7 Z" stroke="#0b1a52" stroke-width="1.6" fill="none" stroke-linejoin="round"/>
<path d="M2.1,16.6 L16.6,0.1" stroke="#fff" stroke-width="2"/>
<path d="M3.2,17.9 L17.7,1.4" stroke="#0b1a52" stroke-width="1.8" stroke-linecap="round"/>
</svg>
<svg class="a" style="left:139.5px;top:773.5px" width="9" height="12"><path d="M1.8,1.5 L6.3,6 L1.8,10.5" stroke="#0b1a52" stroke-width="2.2" fill="none"/></svg>
<div class="fl" style="left:160px;top:772.4px;letter-spacing:0px">Level</div>
<svg class="a" style="left:83px;top:801.3px" width="18" height="18" viewBox="0 0 18 18" fill="#0b1a52">
<path d="M9,0.5 L12.2,4.4 L5.8,4.4 Z" stroke="#0b1a52" stroke-width="0.4" stroke-linejoin="round"/><path d="M9,17.9 L12.2,13.3 L5.8,13.3 Z" stroke="#0b1a52" stroke-width="0.4" stroke-linejoin="round"/>
<rect x="0" y="7" width="17.8" height="2.9" fill="#c5c9dc"/><rect x="0" y="7.9" width="17.8" height="1.5" fill="#7c86aa"/>
<rect x="0" y="5.6" width="17.8" height="1.4" rx="0.6"/><rect x="0" y="10.4" width="17.8" height="1.4" rx="0.6"/>
</svg>
<svg class="a" style="left:108px;top:800.3px" width="20" height="20" viewBox="0 0 20 20">
<path d="M2.4,8.7 C5,5.2 7.5,4.5 10.1,4.5 C12.7,4.5 15.3,5.2 17.9,8.7 C15.3,12.2 12.7,12.9 10.1,12.9 C7.5,12.9 5,12.2 2.4,8.7 Z" stroke="#0b1a52" stroke-width="1.6" fill="none" stroke-linejoin="round"/>
<path d="M2.1,16.6 L16.6,0.1" stroke="#fff" stroke-width="2"/>
<path d="M3.2,17.9 L17.7,1.4" stroke="#0b1a52" stroke-width="1.8" stroke-linecap="round"/>
</svg>
<svg class="a" style="left:139.5px;top:804.3px" width="9" height="12"><path d="M1.8,1.5 L6.3,6 L1.8,10.5" stroke="#0b1a52" stroke-width="2.2" fill="none"/></svg>
<div class="fl" style="left:160px;top:803.2px;letter-spacing:0px">Source</div>
<div class="a" style="left:63px;top:832px;width:351px;height:1px;background:#d3d4d9"></div>
<div class="a" style="left:328px;top:846px;width:73px;height:38px;border:1.3px solid #0b1a52;border-radius:4px"></div>
<div class="t" style="left:346px;top:859.2px;font-size:14.2px;color:#0b1a52">Reset</div>
<div class="a" style="left:414px;top:380px;width:2px;height:513px;background:#d2d3d8"></div>
<div class="a" style="left:416px;top:380px;width:1308px;height:32px;background:#d1d2d7"></div>
<div class="th" style="left:474.4px">Time</div>
<div class="th" style="left:689.4px">Resource</div>
<div class="th" style="left:919.2px">Anomaly</div>
<div class="th" style="left:990.9px">Severity</div>
<div class="th" style="left:1070.9px">Message</div>
<div class="th" style="left:1384px">Groups</div>
<div class="a" style="left:416px;top:412.0px;width:1308px;height:46.2px;background:#f2f2f5"></div>
<svg class="a" style="left:444px;top:426.3px" width="6" height="18" fill="#7a7a7a"><circle cx="3" cy="2.2" r="2.1"/><circle cx="3" cy="8.8" r="2.1"/><circle cx="3" cy="15.4" r="2.1"/></svg>
<div class="cell" style="left:477px;top:428.5px;letter-spacing:0.3px">2022-12-01 01:36:24.668</div>
<div class="cell" style="left:691px;top:429.2px;font-size:12.75px">VMware ESXi 6.7 Host</div>
<svg class="a" style="left:888px;top:426.3px" width="6" height="18" fill="#7a7a7a"><circle cx="3" cy="2.2" r="2.1"/><circle cx="3" cy="8.8" r="2.1"/><circle cx="3" cy="15.4" r="2.1"/></svg>
<div class="cell mono" style="left:1072px;top:429.3px;font-size:13.2px">&lt;167&gt;2022-12-01T09:36:14.818Z se-…</div>
<svg class="a" style="left:1356px;top:430.1px" width="10" height="12"><path d="M2.2,1.5 L6.5,6 L2.2,10.5" stroke="#0b1a52" stroke-width="2.3" fill="none"/></svg>
<div class="cell" style="left:1386.5px;top:428.1px;font-size:13.3px">VMware Hosts, Virtualization</div>
<svg class="a" style="left:1596px;top:426.3px" width="6" height="18" fill="#7a7a7a"><circle cx="3" cy="2.2" r="2.1"/><circle cx="3" cy="8.8" r="2.1"/><circle cx="3" cy="15.4" r="2.1"/></svg>
<svg class="a" style="left:444px;top:472.5px" width="6" height="18" fill="#7a7a7a"><circle cx="3" cy="2.2" r="2.1"/><circle cx="3" cy="8.8" r="2.1"/><circle cx="3" cy="15.4" r="2.1"/></svg>
<div class="cell" style="left:477px;top:474.7px;letter-spacing:0.3px">2022-12-01 01:36:24.663</div>
<div class="cell" style="left:691px;top:475.4px;font-size:12.75px">VMware ESXi 6.7 Host</div>
<svg class="a" style="left:888px;top:472.5px" width="6" height="18" fill="#7a7a7a"><circle cx="3" cy="2.2" r="2.1"/><circle cx="3" cy="8.8" r="2.1"/><circle cx="3" cy="15.4" r="2.1"/></svg>
<div class="cell mono" style="left:1072px;top:475.5px;font-size:13.2px">&lt;167&gt;2022-12-01T09:36:14.814Z se-…</div>
<svg class="a" style="left:1356px;top:476.3px" width="10" height="12"><path d="M2.2,1.5 L6.5,6 L2.2,10.5" stroke="#0b1a52" stroke-width="2.3" fill="none"/></svg>
<div class="cell" style="left:1386.5px;top:474.3px;font-size:13.3px">VMware Hosts, Virtualization</div>
<svg class="a" style="left:1596px;top:472.5px" width="6" height="18" fill="#7a7a7a"><circle cx="3" cy="2.2" r="2.1"/><circle cx="3" cy="8.8" r="2.1"/><circle cx="3" cy="15.4" r="2.1"/></svg>
<div class="a" style="left:416px;top:504.4px;width:1308px;height:46.2px;background:#f2f2f5"></div>
<svg class="a" style="left:444px;top:518.7px" width="6" height="18" fill="#7a7a7a"><circle cx="3" cy="2.2" r="2.1"/><circle cx="3" cy="8.8" r="2.1"/><circle cx="3" cy="15.4" r="2.1"/></svg>
<div class="cell" style="left:477px;top:520.9px;letter-spacing:0.3px">2022-12-01 01:36:24.658</div>
<div class="cell" style="left:691px;top:521.6px;font-size:12.75px">VMware ESXi 6.7 Host</div>
<svg class="a" style="left:888px;top:518.7px" width="6" height="18" fill="#7a7a7a"><circle cx="3" cy="2.2" r="2.1"/><circle cx="3" cy="8.8" r="2.1"/><circle cx="3" cy="15.4" r="2.1"/></svg>
<div class="cell mono" style="left:1072px;top:521.7px;font-size:13.2px">&lt;167&gt;2022-12-01T09:36:14.809Z se-…</div>
<svg class="a" style="left:1356px;top:522.5px" width="10" height="12"><path d="M2.2,1.5 L6.5,6 L2.2,10.5" stroke="#0b1a52" stroke-width="2.3" fill="none"/></svg>
<div class="cell" style="left:1386.5px;top:520.5px;font-size:13.3px">VMware Hosts, Virtualization</div>
<svg class="a" style="left:1596px;top:518.7px" width="6" height="18" fill="#7a7a7a"><circle cx="3" cy="2.2" r="2.1"/><circle cx="3" cy="8.8" r="2.1"/><circle cx="3" cy="15.4" r="2.1"/></svg>
<svg class="a" style="left:444px;top:564.9px" width="6" height="18" fill="#7a7a7a"><circle cx="3" cy="2.2" r="2.1"/><circle cx="3" cy="8.8" r="2.1"/><circle cx="3" cy="15.4" r="2.1"/></svg>
<div class="cell" style="left:477px;top:567.1px;letter-spacing:0.3px">2022-12-01 01:36:24.657</div>
<div class="cell" style="left:691px;top:567.8px;font-size:12.75px">VMware ESXi 6.7 Host</div>
<svg class="a" style="left:888px;top:564.9px" width="6" height="18" fill="#7a7a7a"><circle cx="3" cy="2.2" r="2.1"/><circle cx="3" cy="8.8" r="2.1"/><circle cx="3" cy="15.4" r="2.1"/></svg>
<div class="cell mono" style="left:1072px;top:567.9px;font-size:13.2px">&lt;167&gt;2022-12-01T09:36:14.808Z se-…</div>
<svg class="a" style="left:1356px;top:568.7px" width="10" height="12"><path d="M2.2,1.5 L6.5,6 L2.2,10.5" stroke="#0b1a52" stroke-width="2.3" fill="none"/></svg>
<div class="cell" style="left:1386.5px;top:566.7px;font-size:13.3px">VMware Hosts, Virtualization</div>
<svg class="a" style="left:1596px;top:564.9px" width="6" height="18" fill="#7a7a7a"><circle cx="3" cy="2.2" r="2.1"/><circle cx="3" cy="8.8" r="2.1"/><circle cx="3" cy="15.4" r="2.1"/></svg>
<div class="a" style="left:416px;top:596.8px;width:1308px;height:46.2px;background:#f2f2f5"></div>
<svg class="a" style="left:444px;top:611.1px" width="6" height="18" fill="#7a7a7a"><circle cx="3" cy="2.2" r="2.1"/><circle cx="3" cy="8.8" r="2.1"/><circle cx="3" cy="15.4" r="2.1"/></svg>
<div class="cell" style="left:477px;top:613.3px;letter-spacing:0.3px">2022-12-01 01:36:24.656</div>
<div class="cell" style="left:691px;top:614.0px;font-size:12.75px">VMware ESXi 6.7 Host</div>
<svg class="a" style="left:888px;top:611.1px" width="6" height="18" fill="#7a7a7a"><circle cx="3" cy="2.2" r="2.1"/><circle cx="3" cy="8.8" r="2.1"/><circle cx="3" cy="15.4" r="2.1"/></svg>
<div class="cell mono" style="left:1072px;top:614.1px;font-size:13.2px">&lt;167&gt;2022-12-01T09:36:14.806Z se-…</div>
<svg class="a" style="left:1356px;top:614.9px" width="10" height="12"><path d="M2.2,1.5 L6.5,6 L2.2,10.5" stroke="#0b1a52" stroke-width="2.3" fill="none"/></svg>
<div class="cell" style="left:1386.5px;top:612.9px;font-size:13.3px">VMware Hosts, Virtualization</div>
<svg class="a" style="left:1596px;top:611.1px" width="6" height="18" fill="#7a7a7a"><circle cx="3" cy="2.2" r="2.1"/><circle cx="3" cy="8.8" r="2.1"/><circle cx="3" cy="15.4" r="2.1"/></svg>
<svg class="a" style="left:444px;top:657.3px" width="6" height="18" fill="#7a7a7a"><circle cx="3" cy="2.2" r="2.1"/><circle cx="3" cy="8.8" r="2.1"/><circle cx="3" cy="15.4" r="2.1"/></svg>
<div class="cell" style="left:477px;top:659.5px;letter-spacing:0.3px">2022-12-01 01:36:24.646</div>
<div class="cell" style="left:691px;top:660.2px;font-size:12.75px">VMware ESXi 6.7 Host</div>
<svg class="a" style="left:888px;top:657.3px" width="6" height="18" fill="#7a7a7a"><circle cx="3" cy="2.2" r="2.1"/><circle cx="3" cy="8.8" r="2.1"/><circle cx="3" cy="15.4" r="2.1"/></svg>
<div class="cell mono" style="left:1072px;top:660.3px;font-size:13.2px">&lt;167&gt;2022-12-01T09:36:14.796Z se-…</div>
<svg class="a" style="left:1356px;top:661.1px" width="10" height="12"><path d="M2.2,1.5 L6.5,6 L2.2,10.5" stroke="#0b1a52" stroke-width="2.3" fill="none"/></svg>
<div class="cell" style="left:1386.5px;top:659.1px;font-size:13.3px">VMware Hosts, Virtualization</div>
<svg class="a" style="left:1596px;top:657.3px" width="6" height="18" fill="#7a7a7a"><circle cx="3" cy="2.2" r="2.1"/><circle cx="3" cy="8.8" r="2.1"/><circle cx="3" cy="15.4" r="2.1"/></svg>
<div class="a" style="left:416px;top:689.2px;width:1308px;height:46.2px;background:#f2f2f5"></div>
<svg class="a" style="left:444px;top:703.5px" width="6" height="18" fill="#7a7a7a"><circle cx="3" cy="2.2" r="2.1"/><circle cx="3" cy="8.8" r="2.1"/><circle cx="3" cy="15.4" r="2.1"/></svg>
<div class="cell" style="left:477px;top:705.7px;letter-spacing:0.3px">2022-12-01 01:36:24.642</div>
<div class="cell" style="left:691px;top:706.4px;font-size:12.75px">VMware ESXi 6.7 Host</div>
<svg class="a" style="left:888px;top:703.5px" width="6" height="18" fill="#7a7a7a"><circle cx="3" cy="2.2" r="2.1"/><circle cx="3" cy="8.8" r="2.1"/><circle cx="3" cy="15.4" r="2.1"/></svg>
<div class="cell mono" style="left:1072px;top:706.5px;font-size:13.2px">&lt;167&gt;2022-12-01T09:36:14.792Z se-…</div>
<svg class="a" style="left:1356px;top:707.3px" width="10" height="12"><path d="M2.2,1.5 L6.5,6 L2.2,10.5" stroke="#0b1a52" stroke-width="2.3" fill="none"/></svg>
<div class="cell" style="left:1386.5px;top:705.3px;font-size:13.3px">VMware Hosts, Virtualization</div>
<svg class="a" style="left:1596px;top:703.5px" width="6" height="18" fill="#7a7a7a"><circle cx="3" cy="2.2" r="2.1"/><circle cx="3" cy="8.8" r="2.1"/><circle cx="3" cy="15.4" r="2.1"/></svg>
<svg class="a" style="left:444px;top:749.7px" width="6" height="18" fill="#7a7a7a"><circle cx="3" cy="2.2" r="2.1"/><circle cx="3" cy="8.8" r="2.1"/><circle cx="3" cy="15.4" r="2.1"/></svg>
<div class="cell" style="left:477px;top:751.9px;letter-spacing:0.3px">2022-12-01 01:36:24.637</div>
<div class="cell" style="left:691px;top:752.6px;font-size:12.75px">VMware ESXi 6.7 Host</div>
<svg class="a" style="left:888px;top:749.7px" width="6" height="18" fill="#7a7a7a"><circle cx="3" cy="2.2" r="2.1"/><circle cx="3" cy="8.8" r="2.1"/><circle cx="3" cy="15.4" r="2.1"/></svg>
<div class="cell mono" style="left:1072px;top:752.7px;font-size:13.2px">&lt;167&gt;2022-12-01T09:36:14.787Z se-…</div>
<svg class="a" style="left:1356px;top:753.5px" width="10" height="12"><path d="M2.2,1.5 L6.5,6 L2.2,10.5" stroke="#0b1a52" stroke-width="2.3" fill="none"/></svg>
<div class="cell" style="left:1386.5px;top:751.5px;font-size:13.3px">VMware Hosts, Virtualization</div>
<svg class="a" style="left:1596px;top:749.7px" width="6" height="18" fill="#7a7a7a"><circle cx="3" cy="2.2" r="2.1"/><circle cx="3" cy="8.8" r="2.1"/><circle cx="3" cy="15.4" r="2.1"/></svg>
<div class="a" style="left:416px;top:781.6px;width:1308px;height:46.2px;background:#f2f2f5"></div>
<svg class="a" style="left:444px;top:795.9px" width="6" height="18" fill="#7a7a7a"><circle cx="3" cy="2.2" r="2.1"/><circle cx="3" cy="8.8" r="2.1"/><circle cx="3" cy="15.4" r="2.1"/></svg>
<div class="cell" style="left:477px;top:798.1px;letter-spacing:0.3px">2022-12-01 01:36:24.636</div>
<div class="cell" style="left:691px;top:798.8px;font-size:12.75px">VMware ESXi 6.7 Host</div>
<svg class="a" style="left:888px;top:795.9px" width="6" height="18" fill="#7a7a7a"><circle cx="3" cy="2.2" r="2.1"/><circle cx="3" cy="8.8" r="2.1"/><circle cx="3" cy="15.4" r="2.1"/></svg>
<div class="cell mono" style="left:1072px;top:798.9px;font-size:13.2px">&lt;167&gt;2022-12-01T09:36:14.785Z se-…</div>
<svg class="a" style="left:1356px;top:799.7px" width="10" height="12"><path d="M2.2,1.5 L6.5,6 L2.2,10.5" stroke="#0b1a52" stroke-width="2.3" fill="none"/></svg>
<div class="cell" style="left:1386.5px;top:797.7px;font-size:13.3px">VMware Hosts, Virtualization</div>
<svg class="a" style="left:1596px;top:795.9px" width="6" height="18" fill="#7a7a7a"><circle cx="3" cy="2.2" r="2.1"/><circle cx="3" cy="8.8" r="2.1"/><circle cx="3" cy="15.4" r="2.1"/></svg>
<svg class="a" style="left:444px;top:842.1px" width="6" height="18" fill="#7a7a7a"><circle cx="3" cy="2.2" r="2.1"/><circle cx="3" cy="8.8" r="2.1"/><circle cx="3" cy="15.4" r="2.1"/></svg>
<div class="cell" style="left:477px;top:844.3px;letter-spacing:0.3px">2022-12-01 01:36:24.635</div>
<div class="cell" style="left:691px;top:845.0px;font-size:12.75px">VMware ESXi 6.7 Host</div>
<svg class="a" style="left:888px;top:842.1px" width="6" height="18" fill="#7a7a7a"><circle cx="3" cy="2.2" r="2.1"/><circle cx="3" cy="8.8" r="2.1"/><circle cx="3" cy="15.4" r="2.1"/></svg>
<div class="cell mono" style="left:1072px;top:845.1px;font-size:13.2px">&lt;167&gt;2022-12-01T09:36:14.784Z se-…</div>
<svg class="a" style="left:1356px;top:845.9px" width="10" height="12"><path d="M2.2,1.5 L6.5,6 L2.2,10.5" stroke="#0b1a52" stroke-width="2.3" fill="none"/></svg>
<div class="cell" style="left:1386.5px;top:843.9px;font-size:13.3px">VMware Hosts, Virtualization</div>
<svg class="a" style="left:1596px;top:842.1px" width="6" height="18" fill="#7a7a7a"><circle cx="3" cy="2.2" r="2.1"/><circle cx="3" cy="8.8" r="2.1"/><circle cx="3" cy="15.4" r="2.1"/></svg>
<div class="a" style="left:416px;top:874.0px;width:1308px;height:46.2px;background:#f2f2f5"></div>
<svg class="a" style="left:444px;top:888.3px" width="6" height="18" fill="#7a7a7a"><circle cx="3" cy="2.2" r="2.1"/><circle cx="3" cy="8.8" r="2.1"/><circle cx="3" cy="15.4" r="2.1"/></svg>
<div class="cell" style="left:477px;top:890.5px;letter-spacing:0.3px">2022-12-01 01:36:24.634</div>
<div class="cell" style="left:691px;top:891.2px;font-size:12.75px">VMware ESXi 6.7 Host</div>
<svg class="a" style="left:888px;top:888.3px" width="6" height="18" fill="#7a7a7a"><circle cx="3" cy="2.2" r="2.1"/><circle cx="3" cy="8.8" r="2.1"/><circle cx="3" cy="15.4" r="2.1"/></svg>
<div class="cell mono" style="left:1072px;top:891.3px;font-size:13.2px">&lt;167&gt;2022-12-01T09:36:14.783Z se-…</div>
<svg class="a" style="left:1356px;top:892.1px" width="10" height="12"><path d="M2.2,1.5 L6.5,6 L2.2,10.5" stroke="#0b1a52" stroke-width="2.3" fill="none"/></svg>
<div class="cell" style="left:1386.5px;top:890.1px;font-size:13.3px">VMware Hosts, Virtualization</div>
<svg class="a" style="left:1596px;top:888.3px" width="6" height="18" fill="#7a7a7a"><circle cx="3" cy="2.2" r="2.1"/><circle cx="3" cy="8.8" r="2.1"/><circle cx="3" cy="15.4" r="2.1"/></svg>
<div class="vd" style="left:469.4px"></div>
<div class="vd" style="left:683.4px"></div>
<div class="vd" style="left:913.3px"></div>
<div class="vd" style="left:985.6px"></div>
<div class="vd" style="left:1065.3px"></div>
<div class="vd" style="left:1379.4px"></div>
<div class="vd" style="left:1621.4px"></div>
<div class="a" style="left:416px;top:811px;width:24px;height:23px;background:#0b1a52;border-radius:0 12px 12px 0"></div>
<svg class="a" style="left:421px;top:815px" width="10" height="14"><path d="M7.5,2 L3,7 L7.5,12" stroke="#fff" stroke-width="1.8" fill="none"/></svg>
<div class="a" style="left:1461px;top:95px;width:249px;height:475px;background:#fff;border-radius:6px;box-shadow:0 3px 14px rgba(0,0,0,0.2)"></div>
<svg class="a" style="left:1473px;top:113px" width="20" height="16"><path d="M2,8.5 L6.8,13 L17.8,2.8" stroke="#0b1a52" stroke-width="3.2" fill="none"/></svg>
<div class="dd" style="top:113.5px">Last 5 minutes</div>
<div class="dd" style="top:148.8px">Last 10 minutes</div>
<div class="dd" style="top:184.0px">Last 15 minutes</div>
<div class="dd" style="top:219.2px">Last 30 minutes</div>
<div class="dd" style="top:254.4px">Last hour</div>
<div class="dd" style="top:289.6px">Last 3 hours</div>
<div class="dd" style="top:324.8px">Last 6 hours</div>
<div class="dd" style="top:360.0px">Last 12 hours</div>
<div class="dd" style="top:395.2px">Last 24 hours</div>
<div class="dd" style="top:430.4px">Last 3 days</div>
<div class="dd" style="top:465.6px">Last week</div>
<div class="dd" style="top:500.8px">Last 30 days</div>
<div class="dd" style="top:536.0px;font-size:15.8px">Custom range</div>
</body></html>
